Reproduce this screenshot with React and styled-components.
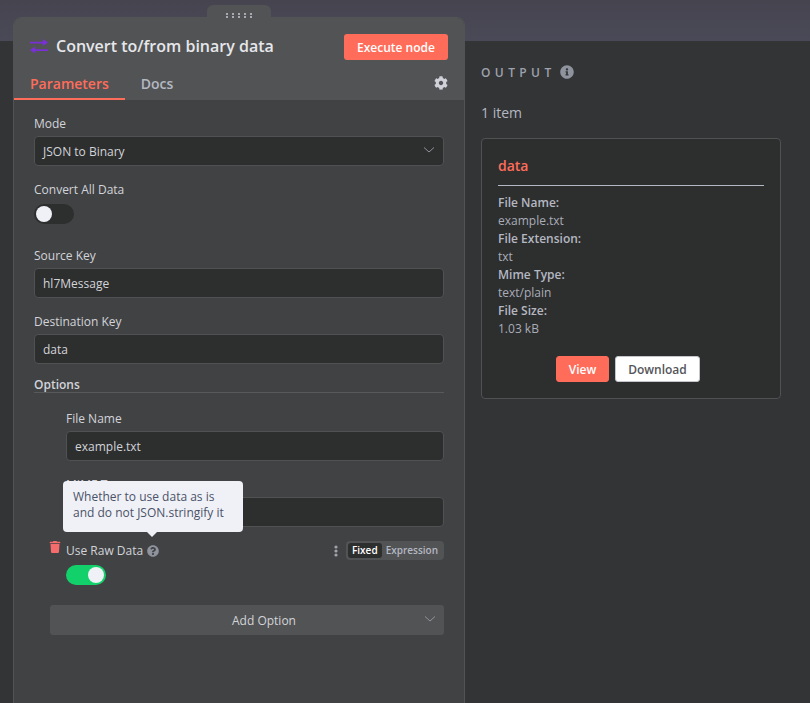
import React from 'react'
import styled, { createGlobalStyle } from 'styled-components'
import { FaCog, FaTrash, FaQuestionCircle, FaInfoCircle } from 'react-icons/fa'

const GlobalStyle = createGlobalStyle`
  html, body {
    margin: 0;
    padding: 0;
    height: 100%;
    background: #333436;
  }
  * { box-sizing: border-box; }
`

const Page = styled.div`
  width: 810px;
  height: 703px;
  overflow: hidden;
  display: flex;
  align-items: flex-start;
  padding: 17px 0 0 13px;
  font-family: 'Open Sans', sans-serif;
  background: linear-gradient(#45444f 0, #4a4957 41px, #333436 41px);
`

const Panel = styled.div`
  position: relative;
  flex: none;
  width: 452px;
  height: 720px;
  background: #414244;
  border: 1px solid #525355;
  border-radius: 8px 8px 0 0;
`

const Handle = styled.div`
  position: absolute;
  left: 193px;
  top: -13px;
  width: 64px;
  height: 20px;
  padding-top: 8px;
  background: #525355;
  border-radius: 6px 6px 0 0;
  display: flex;
  align-items: flex-start;
  justify-content: center;
`

const PanelHead = styled.div`
  height: 82px;
  background: #525355;
  border-radius: 7px 7px 0 0;
  display: flex;
  flex-direction: column;
`

const TitleRow = styled.div`
  display: flex;
  align-items: center;
  height: 56px;
  padding: 0 16px 0 16px;
`

const Title = styled.div`
  flex: 1;
  margin-left: 8px;
  margin-top: -1px;
  font-size: 16px;
  font-weight: 600;
  color: #e6e7ea;
`

const ExecuteButton = styled.button`
  width: 104px;
  height: 26px;
  margin-top: 2px;
  border: 0;
  border-radius: 3px;
  background: #ff6d5a;
  color: #fff;
  font-family: inherit;
  font-size: 12px;
  font-weight: 600;
`

const TabRow = styled.div`
  display: flex;
  align-items: stretch;
  height: 26px;
  padding-right: 16px;
`

const Tab = styled.div`
  padding: 0 16px 5px;
  margin-right: ${(p) => (p.$active ? '0' : 'auto')};
  font-size: 14px;
  font-weight: 600;
  line-height: 19px;
  color: ${(p) => (p.$active ? '#ff6d5a' : '#b4b8c2')};
  border-bottom: 2px solid ${(p) => (p.$active ? '#ff6d5a' : 'transparent')};
`

const GearWrap = styled.div`
  color: #d0d2da;
  font-size: 14px;
  line-height: 14px;
  margin-top: 2px;
`

const Body = styled.div`
  padding: 16px 20px 0 20px;
`

const Label = styled.div`
  font-size: 12px;
  line-height: 16px;
  height: 16px;
  color: #d2d4d9;
  display: flex;
  align-items: center;
`

const Field = styled.div`
  display: flex;
  flex-direction: column;
  gap: ${(p) => p.$gap || 4}px;
  margin-bottom: ${(p) => p.$after || 16}px;
`

const inputBase = `
  height: 30px;
  background: #2d2e2e;
  border: 1px solid #505153;
  border-radius: 4px;
  color: #d2d4d9;
  font-size: 12px;
  display: flex;
  align-items: center;
  padding: 0 8px;
`

const Input = styled.div`
  ${inputBase}
`

const SelectBox = styled.div`
  ${inputBase}
  justify-content: space-between;
  padding-right: 8px;
`

const Chevron = () => (
  <svg width="12" height="14" viewBox="0 0 12 14" fill="none" stroke="#909399" strokeWidth="1" style={{ marginTop: -2 }}>
    <path d="M1 4.5 L6 9 L11 4.5" />
  </svg>
)

const NodeIcon = () => (
  <svg width="18" height="15" viewBox="0 0 18 15" fill="#7a2fd8">
    <path d="M0 2.7 H13 V0 L18 3.5 L13 7 V4.5 H0 Z" />
    <path d="M18 10.2 H5 V7.6 L0 11.1 L5 14.6 V12 H18 Z" />
  </svg>
)

const Toggle = styled.div`
  width: 40px;
  height: 20px;
  border-radius: 10px;
  background: ${(p) => (p.$on ? '#13d16a' : '#2d2e2e')};
  display: flex;
  align-items: center;
  justify-content: ${(p) => (p.$on ? 'flex-end' : 'flex-start')};
  padding: 0 2px;
  &::after {
    content: '';
    width: 16px;
    height: 16px;
    border-radius: 50%;
    background: #f0f1f7;
  }
`

const OptionsTitle = styled.div`
  font-size: 12px;
  font-weight: 600;
  line-height: 16px;
  color: #d2d4d9;
  border-bottom: 1px solid #58595b;
  height: 16px;
  margin-bottom: 18px;
`

const OptionList = styled.div`
  position: relative;
  padding-left: 32px;
`

const OptionRow = styled.div`
  position: relative;
`

const TrashIcon = styled.div`
  position: absolute;
  left: -17px;
  top: 0;
  color: #f56c6c;
  font-size: 12px;
  line-height: 12px;
`

const RawHead = styled.div`
  display: flex;
  align-items: center;
  height: 19px;
  margin-bottom: 5px;
`

const RawLabel = styled.div`
  flex: 1;
  display: flex;
  align-items: center;
  gap: 4px;
  font-size: 12px;
  color: #d2d4d9;
`

const HelpIcon = styled.span`
  display: inline-flex;
  color: #8f939e;
  font-size: 12px;
`

const Dots = styled.span`
  display: inline-flex;
  margin-right: 8px;
`

const ModeSwitch = styled.div`
  display: flex;
  align-items: center;
  height: 19px;
  padding: 2px 6px 2px 2px;
  gap: 4px;
  border-radius: 4px;
  background: #525355;
  font-size: 10px;
  font-weight: 600;
`

const ModeOption = styled.span`
  padding: ${(p) => (p.$active ? '0 4px' : '0')};
  line-height: 15px;
  border-radius: 3px;
  color: ${(p) => (p.$active ? '#fff' : '#b4b8c2')};
  background: ${(p) => (p.$active ? '#2d2e2e' : 'transparent')};
`

const Tooltip = styled.div`
  position: absolute;
  left: 29px;
  top: 70px;
  width: 180px;
  height: 51px;
  padding: 8px 10px;
  background: #f0f1f7;
  border-radius: 4px;
  color: #4a5268;
  font-size: 12px;
  line-height: 16px;
  &::after {
    content: '';
    position: absolute;
    left: 84px;
    bottom: -5px;
    border: 5px solid transparent;
    border-bottom: 0;
    border-top-color: #f0f1f7;
  }
`

const AddOption = styled.div`
  position: relative;
  margin: 20px 0 0 16px;
  padding-left: 34px;
  height: 30px;
  background: #525355;
  border-radius: 3px;
  color: #d2d4d9;
  font-size: 12px;
  display: flex;
  align-items: center;
  justify-content: center;
`

const AddChevron = styled.span`
  position: absolute;
  right: 8px;
  top: 9px;
  display: flex;
`

const Output = styled.div`
  margin: 0 0 0 16px;
  width: 300px;
  padding-top: 46px;
`

const OutputTitle = styled.div`
  display: flex;
  align-items: center;
  gap: 4px;
  height: 18px;
  font-size: 12px;
  font-weight: 600;
  letter-spacing: 4.4px;
  color: #9ea2ad;
`

const InfoWrap = styled.span`
  display: inline-flex;
  color: #8f939e;
  font-size: 14px;
`

const ItemCount = styled.div`
  margin-top: 22px;
  font-size: 14px;
  line-height: 19px;
  color: #b4b8c2;
`

const Card = styled.div`
  margin-top: 16px;
  height: 261px;
  background: #2d2e2e;
  border: 1px solid #505153;
  border-radius: 4px;
  padding: 17px 16px 16px;
`

const CardTitle = styled.div`
  font-size: 14px;
  font-weight: 600;
  line-height: 19px;
  color: #ff6d5a;
  padding-bottom: 10px;
  border-bottom: 1px solid #b4b8c2;
  margin-bottom: 8px;
`

const InfoKey = styled.div`
  font-size: 12px;
  font-weight: 600;
  line-height: 18px;
  color: #b4b8c2;
`

const InfoValue = styled.div`
  font-size: 12px;
  line-height: 18px;
  color: #a9adb8;
`

const CardButtons = styled.div`
  display: flex;
  justify-content: center;
  gap: 6px;
  margin-top: 18px;
  padding-right: 6px;
`

const CardButton = styled.button`
  height: 26px;
  width: ${(p) => (p.$primary ? 53 : 85)}px;
  border-radius: 3px;
  border: 1px solid ${(p) => (p.$primary ? '#ff6d5a' : '#c4c6cc')};
  background: ${(p) => (p.$primary ? '#ff6d5a' : '#fff')};
  color: ${(p) => (p.$primary ? '#fff' : '#54555a')};
  font-family: inherit;
  font-size: 12px;
  font-weight: 600;
  padding: 0;
`

const fileInfo = [
  ['File Name:', 'example.txt'],
  ['File Extension:', 'txt'],
  ['Mime Type:', 'text/plain'],
  ['File Size:', '1.03 kB'],
]

function App() {
  return (
    <Page>
      <GlobalStyle />
      <Panel>
        <Handle>
          <svg width="26" height="5" viewBox="0 0 26 5" fill="#a9abb0">
            {[0, 6, 12, 18, 24].map((x) => (
              <g key={x}>
                <rect x={x} y="0" width="2" height="2" />
                <rect x={x} y="3" width="2" height="2" />
              </g>
            ))}
          </svg>
        </Handle>
        <PanelHead>
          <TitleRow>
            <NodeIcon />
            <Title>Convert to/from binary data</Title>
            <ExecuteButton>Execute node</ExecuteButton>
          </TitleRow>
          <TabRow>
            <Tab $active>Parameters</Tab>
            <Tab>Docs</Tab>
            <GearWrap>
              <FaCog />
            </GearWrap>
          </TabRow>
        </PanelHead>
        <Body>
          <Field>
            <Label>Mode</Label>
            <SelectBox>
              JSON to Binary
              <Chevron />
            </SelectBox>
          </Field>
          <Field $gap={6} $after={24}>
            <Label>Convert All Data</Label>
            <Toggle />
          </Field>
          <Field>
            <Label>Source Key</Label>
            <Input>hl7Message</Input>
          </Field>
          <Field $after={13}>
            <Label>Destination Key</Label>
            <Input>data</Input>
          </Field>
          <OptionsTitle>Options</OptionsTitle>
          <OptionList>
            <Field>
              <Label>File Name</Label>
              <Input>example.txt</Input>
            </Field>
            <Field $after={14}>
              <Label>MIME Type</Label>
              <Input>text/plain</Input>
            </Field>
            <OptionRow>
              <TrashIcon>
                <FaTrash />
              </TrashIcon>
              <RawHead>
                <RawLabel>
                  Use Raw Data
                  <HelpIcon>
                    <FaQuestionCircle />
                  </HelpIcon>
                </RawLabel>
                <Dots>
                  <svg width="4" height="12" viewBox="0 0 4 12" fill="#a0a3ab">
                    <circle cx="2" cy="2" r="1.6" />
                    <circle cx="2" cy="6" r="1.6" />
                    <circle cx="2" cy="10" r="1.6" />
                  </svg>
                </Dots>
                <ModeSwitch>
                  <ModeOption $active>Fixed</ModeOption>
                  <ModeOption>Expression</ModeOption>
                </ModeSwitch>
              </RawHead>
              <Toggle $on />
            </OptionRow>
            <Tooltip>
              Whether to use data as is
              <br />
              and do not JSON.stringify it
            </Tooltip>
          </OptionList>
          <AddOption>
            Add Option
            <AddChevron>
              <Chevron />
            </AddChevron>
          </AddOption>
        </Body>
      </Panel>
      <Output>
        <OutputTitle>
          OUTPUT
          <InfoWrap>
            <FaInfoCircle />
          </InfoWrap>
        </OutputTitle>
        <ItemCount>1 item</ItemCount>
        <Card>
          <CardTitle>data</CardTitle>
          {fileInfo.map(([key, value]) => (
            <div key={key}>
              <InfoKey>{key}</InfoKey>
              <InfoValue>{value}</InfoValue>
            </div>
          ))}
          <CardButtons>
            <CardButton $primary>View</CardButton>
            <CardButton>Download</CardButton>
          </CardButtons>
        </Card>
      </Output>
    </Page>
  )
}

export default App
